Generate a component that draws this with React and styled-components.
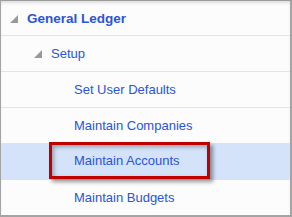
import React from "react";
import styled, { createGlobalStyle } from "styled-components";

const GlobalStyle = createGlobalStyle`
  html, body { margin: 0; padding: 0; background: #fcfcfc; }
  body { font-family: "Liberation Sans", Arial, sans-serif; }
`;

const { Frame, Row, Arrow, Label, Marker } = styles();

const items = [
  { label: "Set User Defaults" },
  { label: "Maintain Companies", last: true },
  { label: "Maintain Accounts", selected: true },
  { label: "Maintain Budgets", end: true },
];

const Triangle = () => (
  <Arrow viewBox="0 0 8 8">
    <polygon points="8,0 8,8 0,8" fill="#999" />
  </Arrow>
);

export default function App() {
  return (
    <>
      <GlobalStyle />
      <Frame>
        <Row $height={35} $indent={9}>
          <Triangle />
          <Label $bold>General Ledger</Label>
        </Row>
        <Row $height={36} $indent={33}>
          <Triangle />
          <Label>Setup</Label>
        </Row>
        {items.map(item =>
          item.selected ? (
            <Row key={item.label} $height={37} $selected $plain>
              <Marker>
                <Label>{item.label}</Label>
              </Marker>
            </Row>
          ) : (
            <Row
              key={item.label}
              $height={item.last || item.end ? 35 : 36}
              $plain={item.last || item.end}
              $indent={73}
            >
              <Label>{item.label}</Label>
            </Row>
          )
        )}
      </Frame>
    </>
  );
}

function styles() {
  const Frame = styled.div`
    width: 292px;
    height: 217px;
    box-sizing: border-box;
    border-top: 1px solid #9c9c9c;
    border-left: 1px solid #a4a4a4;
    border-right: 2px solid #a4a4a4;
    border-bottom: 2px solid #a4a4a4;
    background: #fcfcfc;
    box-shadow: inset 0 3px 4px -2px rgba(0, 0, 0, 0.18);
    display: flex;
    flex-direction: column;
    overflow: hidden;
`;

  const Row = styled.div`
    display: flex;
    align-items: center;
    gap: 9px;
    height: ${p => p.$height}px;
    flex: none;
    box-sizing: border-box;
    padding-left: ${p => p.$indent || 0}px;
    border-bottom: ${p => (p.$plain ? "none" : "1px solid #dbe4f2")};
    background: ${p => (p.$selected ? "#d4e3f9" : "transparent")};
`;

  const Arrow = styled.svg`
    width: 8px;
    height: 8px;
    flex: none;
    margin-top: 1px;
`;

  const Label = styled.span`
    font-family: "Liberation Sans", Arial, sans-serif;
    font-size: ${p => (p.$bold ? "13.5px" : "13px")};
    font-weight: ${p => (p.$bold ? 700 : 400)};
    color: #2955d6;
    white-space: nowrap;
`;

  const Marker = styled.div`
    margin-left: 48px;
    margin-top: -1px;
    align-self: flex-start;
    width: 161px;
    height: 37px;
    box-sizing: border-box;
    border: 3px solid #c00000;
    padding-left: 22px;
    display: flex;
    align-items: center;
    box-shadow: 3px 3px 4px rgba(0, 0, 0, 0.4), inset 2px 2px 4px rgba(0, 0, 0, 0.3);
`;

  return { Frame, Row, Arrow, Label, Marker };
}
